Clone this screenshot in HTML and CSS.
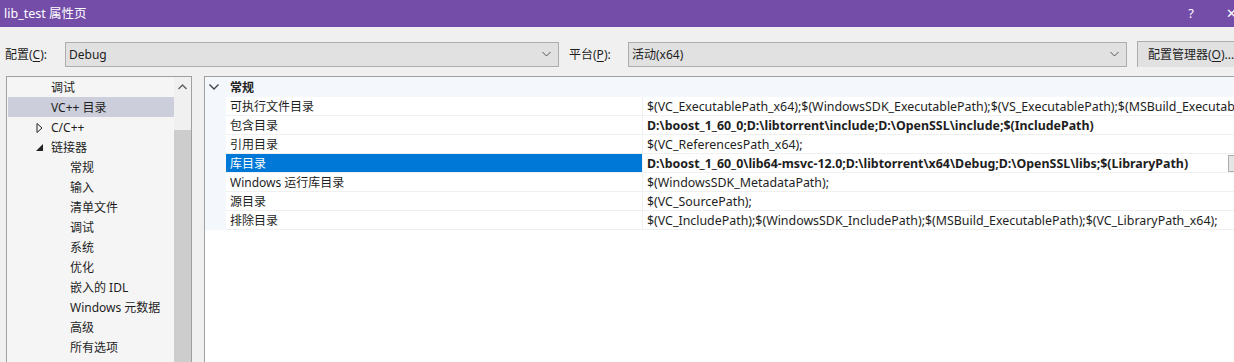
FILE: index.html
```html
<!DOCTYPE html>
<html>
<head>
	<meta charset="utf-8">
	<title>lib_test 属性页</title>
	<link rel="stylesheet" href="styles.css">
</head>
<body>
	<div class="titlebar">
		<span class="title">lib_test 属性页</span>
		<span class="tb-btn help">?</span>
		<span class="tb-btn close">✕</span>
	</div>

	<div class="toolbar">
		<label class="lbl">配置(<u>C</u>):</label>
		<div class="combo combo-config">
			<span>Debug</span>
			<svg class="arrow" width="9" height="6" viewBox="0 0 9 6"><polyline points="0.5,1 4.5,5 8.5,1" fill="none" stroke="#555" stroke-width="1"/></svg>
		</div>
		<label class="lbl lbl-plat">平台(<u>P</u>):</label>
		<div class="combo combo-plat">
			<span>活动(x64)</span>
			<svg class="arrow" width="9" height="6" viewBox="0 0 9 6"><polyline points="0.5,1 4.5,5 8.5,1" fill="none" stroke="#555" stroke-width="1"/></svg>
		</div>
		<div class="btn">配置管理器(<u>O</u>)...</div>
	</div>

	<div class="main">
		<div class="tree">
			<div class="tree-list">
				<div class="node lvl1">调试</div>
				<div class="node lvl1 sel">VC++ 目录</div>
				<div class="node lvl1"><svg class="exp" width="7" height="10" viewBox="0 0 7 10"><polygon points="1,0.5 6,5 1,9.5" fill="none" stroke="#222" stroke-width="1"/></svg>C/C++</div>
				<div class="node lvl1"><svg class="exp" width="7" height="7" viewBox="0 0 7 7"><polygon points="7,0 7,7 0,7" fill="#222"/></svg>链接器</div>
				<div class="node lvl2">常规</div>
				<div class="node lvl2">输入</div>
				<div class="node lvl2">清单文件</div>
				<div class="node lvl2">调试</div>
				<div class="node lvl2">系统</div>
				<div class="node lvl2">优化</div>
				<div class="node lvl2">嵌入的 IDL</div>
				<div class="node lvl2">Windows 元数据</div>
				<div class="node lvl2">高级</div>
				<div class="node lvl2">所有选项</div>
			</div>
			<div class="vscroll">
				<svg class="up" width="9" height="6" viewBox="0 0 9 6"><polyline points="0.5,5 4.5,1 8.5,5" fill="none" stroke="#606060" stroke-width="1.4"/></svg>
				<div class="thumb"></div>
			</div>
		</div>

		<div class="grid">
			<div class="cat">
				<svg class="cat-arrow" width="10" height="6" viewBox="0 0 10 6"><polyline points="0.5,0.5 5,5 9.5,0.5" fill="none" stroke="#444" stroke-width="1.4"/></svg>
				<b>常规</b>
			</div>
			<div class="row">
				<div class="name">可执行文件目录</div>
				<div class="val">$(VC_ExecutablePath_x64);$(WindowsSDK_ExecutablePath);$(VS_ExecutablePath);$(MSBuild_Executable</div>
			</div>
			<div class="row">
				<div class="name">包含目录</div>
				<div class="val bold">D:\boost_1_60_0;D:\libtorrent\include;D:\OpenSSL\include;$(IncludePath)</div>
			</div>
			<div class="row">
				<div class="name">引用目录</div>
				<div class="val">$(VC_ReferencesPath_x64);</div>
			</div>
			<div class="row selected">
				<div class="name">库目录</div>
				<div class="val bold">D:\boost_1_60_0\lib64-msvc-12.0;D:\libtorrent\x64\Debug;D:\OpenSSL\libs;$(LibraryPath)<span class="drop"></span></div>
			</div>
			<div class="row">
				<div class="name">Windows 运行库目录</div>
				<div class="val">$(WindowsSDK_MetadataPath);</div>
			</div>
			<div class="row">
				<div class="name">源目录</div>
				<div class="val">$(VC_SourcePath);</div>
			</div>
			<div class="row">
				<div class="name">排除目录</div>
				<div class="val">$(VC_IncludePath);$(WindowsSDK_IncludePath);$(MSBuild_ExecutablePath);$(VC_LibraryPath_x64);</div>
			</div>
		</div>
	</div>
</body>
</html>
```

FILE: styles.css
```css
*{padding:0; margin:0; box-sizing:border-box;}
html,body{height:100%;}
body{background:#F0F0F0; font-family:"Noto Sans","Noto Sans CJK SC",sans-serif; font-size:12px; color:#1E1E1E; overflow:hidden; width:1234px; display:flex; flex-direction:column;}
u{text-decoration:underline; text-underline-offset:2px;}

.titlebar{height:27px; background:#744DA9; color:#fff; display:flex; align-items:center; padding-left:4px; font-size:12.5px; flex:none;}
.title{flex:1; margin-top:-3px;}
.tb-btn{text-align:center; font-size:13px; margin-top:-2px; flex:none;}
.help{width:14px; margin-right:28px;}
.close{width:8px; overflow:hidden; text-align:left;}

.toolbar{display:flex; align-items:center; height:26px; margin-top:14px; flex:none; overflow:hidden;}
.toolbar > *{flex:none;}
.lbl{width:65px; padding-left:5px;}
.lbl-plat{width:69px; padding-left:10px;}
.combo{height:25px; background:#E1E1E1; border:1px solid #ADADAD; display:flex; align-items:center; padding:0 7px 0 3px; justify-content:space-between;}
.combo-config{width:494px;}
.combo-plat{width:499px;}
.btn{margin-left:10px; height:27px; background:#E1E1E1; border:1px solid #ADADAD; display:flex; align-items:center; padding-left:10px; width:110px; white-space:nowrap; overflow:hidden;}

.main{flex:1; display:flex; margin-top:9px; min-height:0;}
.tree{flex:none; width:186px; margin-left:6px; border:1px solid #A0A0A0; border-bottom:none; background:#F5F5F5; display:flex; padding:0 0 0 1px;}
.tree-list{flex:1; min-width:0;}
.node{height:20px; line-height:18px; padding-top:2px; white-space:nowrap; position:relative;}
.lvl1{padding-left:43px;}
.lvl2{padding-left:62px;}
.node.sel{background:#CCCEDB;}
.exp{position:absolute; left:28px; top:6px;}
.node:nth-child(4) .exp{top:7px;}
.vscroll{flex:none; width:17px; background:#F0F0F0; display:flex; flex-direction:column; align-items:center;}
.up{margin-top:7px;}
.thumb{margin-top:40px; width:17px; flex:1; background:#CDCDCD;}

.grid{flex:1; min-width:0; margin-left:12px; border-left:1px solid #A0A0A0; border-top:1px solid #A0A0A0; background:#fff; overflow:hidden;}
.cat{height:20px; background:#F4F7FC; display:flex; align-items:center; padding-left:4px;}
.cat-arrow{margin:0 11px 0 0;}
.cat b{font-weight:bold;}
.row{display:flex; height:19px; line-height:17px; background:#F4F7FC; padding-left:21px;}
.name{flex:none; width:417px; background:#fff; padding:1px 0 0 4px; border-bottom:1px solid #F0F0F0; border-right:1px solid #F0F0F0; white-space:nowrap;}
.val{flex:1; min-width:0; background:#fff; padding:1px 0 0 4px; border-bottom:1px solid #F0F0F0; white-space:nowrap; overflow:hidden; position:relative; font-size:12.4px;}
.bold{font-weight:bold;}
.selected .name{background:#0078D7; color:#fff;}
.drop{position:absolute; left:585px; top:1px; width:12px; height:17px; background:#E5E5E5; border:1px solid #ADADAD;}
```
